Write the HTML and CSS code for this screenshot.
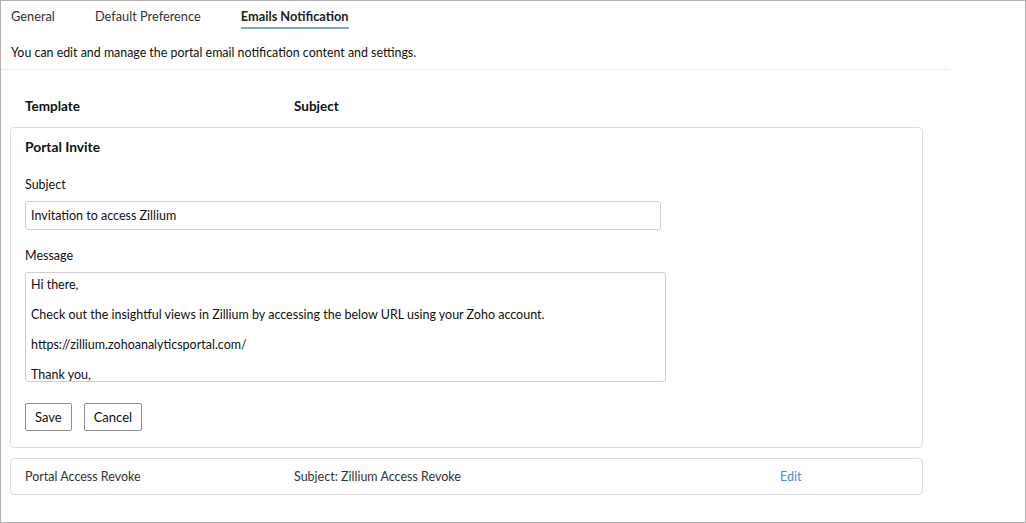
FILE: index.html
```
<html>
<head>
    <meta charset="utf-8" />
    <title>Portal Settings</title>
    <link rel="stylesheet" href="styles.css">
</head>
<body>
    <div class="frame">
        <nav class="tabs">
            <span class="tab">General</span>
            <span class="tab">Default Preference</span>
            <span class="tab active">Emails Notification</span>
        </nav>
        <p class="intro">You can edit and manage the portal email notification content and settings.</p>
        <div class="content">
            <div class="cols head">
                <span class="col-name">Template</span>
                <span class="col-subject">Subject</span>
            </div>
            <div class="card open">
                <h3>Portal Invite</h3>
                <label>Subject</label>
                <input class="field" type="text" value="Invitation to access Zillium" />
                <label>Message</label>
                <div class="message">
                    <p>Hi there,</p>
                    <p>Check out the insightful views in Zillium by accessing the below URL using your Zoho account.</p>
                    <p>https://zillium.zohoanalyticsportal.com/</p>
                    <p>Thank you,</p>
                </div>
                <div class="actions">
                    <button>Save</button>
                    <button>Cancel</button>
                </div>
            </div>
            <div class="card cols row">
                <span class="col-name">Portal Access Revoke</span>
                <span class="col-subject">Subject: Zillium Access Revoke</span>
                <a class="edit">Edit</a>
            </div>
        </div>
    </div>
</body>
</html>
```

FILE: styles.css
```
html, body {
    margin: 0;
    padding: 0;
}
body {
    font-family: Lato, "Open Sans", sans-serif;
    color: #111;
    background: #fff;
}
.frame {
    box-sizing: border-box;
    width: 1026px;
    height: 523px;
    border: 1px solid #b4b1b1;
    overflow: hidden;
}
.tabs {
    display: flex;
    gap: 40px;
    padding: 0 10px;
    height: 28px;
    font-size: 12.8px;
    color: #333;
}
.tab {
    box-sizing: border-box;
    padding-top: 7px;
    border-bottom: 2px solid transparent;
}
.tab.active {
    font-weight: bold;
    color: #222;
    border-bottom-color: #7ba6dc;
}
.intro {
    margin: 0;
    width: 949px;
    box-sizing: border-box;
    padding: 16px 10px 0;
    height: 41px;
    font-size: 12.4px;
    border-bottom: 1px solid #ececec;
}
.content {
    padding: 0 0 0 9px;
    width: 913px;
}
.cols {
    display: flex;
    align-items: center;
    font-size: 12.5px;
}
.col-name {
    width: 269px;
}
.col-subject {
    width: 486px;
}
.head {
    box-sizing: border-box;
    height: 57px;
    padding: 14px 15px 0;
    font-weight: bold;
    font-size: 13.5px;
}
.card {
    box-sizing: border-box;
    border: 1px solid #dedede;
    border-radius: 4px;
    padding: 0 14px;
}
.open {
    height: 321px;
    font-size: 12.5px;
}
.open h3 {
    margin: 0;
    padding-top: 10px;
    height: 37px;
    box-sizing: border-box;
    font-size: 13.8px;
}
.open label {
    display: block;
    padding-top: 12px;
    height: 36px;
    box-sizing: border-box;
}
.field {
    display: block;
    box-sizing: border-box;
    width: 636px;
    height: 29px;
    margin: 0 0 6px;
    padding: 0 5px;
    border: 1px solid #cfcfcf;
    border-radius: 3px;
    font-family: inherit;
    font-size: 12.5px;
    color: #111;
}
.message {
    box-sizing: border-box;
    width: 641px;
    height: 110px;
    border: 1px solid #cfcfcf;
    border-radius: 3px;
    padding: 3px 5px 0;
    overflow: hidden;
    font-size: 12.5px;
}
.message p {
    margin: 0;
    line-height: 18px;
    height: 30px;
}
.actions {
    display: flex;
    gap: 12px;
    margin-top: 21px;
}
.actions button {
    box-sizing: border-box;
    height: 28px;
    padding: 0 9px;
    background: #fff;
    border: 1px solid #8f8f8f;
    border-radius: 2px;
    font-family: inherit;
    font-size: 13px;
    color: #111;
}
.row {
    margin-top: 10px;
    height: 37px;
    color: #333;
}
.edit {
    color: #4a8ee0;
}
```
